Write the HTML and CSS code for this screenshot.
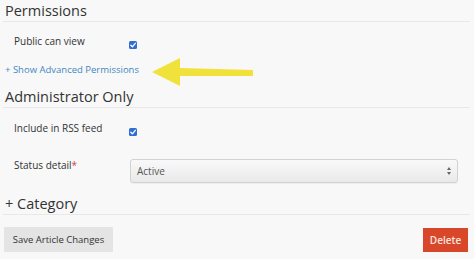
FILE: index.html
```html
<!DOCTYPE html>
<html>
<head>
<meta charset="utf-8">
<link rel="stylesheet" href="styles.css">
</head>
<body>
<div class="page">
  <h2 class="section-title first">Permissions</h2>
  <div class="form-row row-public">
    <span class="field-label">Public can view</span>
    <span class="checkbox"><svg viewBox="0 0 8 8" width="8" height="8"><rect x="0" y="0" width="8" height="8" rx="1.5" fill="#2f6ed6"/><path d="M1.8 4.2 L3.4 5.8 L6.3 2.3" fill="none" stroke="#fff" stroke-width="1.3" stroke-linecap="round" stroke-linejoin="round"/></svg></span>
  </div>
  <a class="advanced-link" href="#">+ Show Advanced Permissions</a>
  <h2 class="section-title admin">Administrator Only</h2>
  <div class="form-row row-rss">
    <span class="field-label">Include in RSS feed</span>
    <span class="checkbox"><svg viewBox="0 0 8 8" width="8" height="8"><rect x="0" y="0" width="8" height="8" rx="1.5" fill="#2f6ed6"/><path d="M1.8 4.2 L3.4 5.8 L6.3 2.3" fill="none" stroke="#fff" stroke-width="1.3" stroke-linecap="round" stroke-linejoin="round"/></svg></span>
  </div>
  <div class="form-row row-status">
    <span class="field-label">Status detail<span class="required">*</span></span>
    <div class="select">
      <span class="select-value">Active</span>
      <svg class="select-arrows" viewBox="0 0 6 10" width="6" height="10"><path d="M3 1 L5 4 L1 4 Z" fill="#666"/><path d="M3 9 L5 6 L1 6 Z" fill="#666"/></svg>
    </div>
  </div>
  <h2 class="section-title category">+ Category</h2>
  <div class="actions">
    <button class="btn btn-save">Save Article Changes</button>
    <button class="btn btn-delete">Delete</button>
  </div>
  <svg class="annotation-arrow" viewBox="0 0 102 28" width="102" height="28"><polygon points="0,14 28,0 28,10 101,12 101,18 28,18 28,28" fill="#f0e23a"/></svg>
</div>
</body>
</html>
```

FILE: styles.css
```css
html, body {
  margin: 0;
  padding: 0;
  background: #f8f8f8;
}
body {
  font-family: "Open Sans", "Liberation Sans", sans-serif;
  color: #333;
}
.page {
  position: relative;
  padding: 0 4px 0 3px;
}
.section-title {
  font-size: 14.5px;
  font-weight: 400;
  line-height: 18px;
  margin: 0;
  padding: 0 0 1px 2px;
  border-bottom: 1px solid #e8e8e8;
  color: #333;
}
.section-title.first { margin-top: 2px; }
.section-title.admin { margin-top: 11px; }
.section-title.category { margin-top: 12px; }
.form-row {
  display: flex;
  align-items: flex-start;
  font-size: 10px;
  line-height: 14px;
}
.field-label {
  width: 115px;
  padding-left: 11px;
  flex: none;
}
.checkbox {
  display: flex;
  margin-top: 7px;
}
.row-public { margin-top: 12px; }
.row-rss { margin-top: 13px; }
.row-status { margin-top: 22px; }
.required { color: #d9413a; }
.advanced-link {
  display: block;
  margin-top: 14px;
  padding-left: 2px;
  font-size: 9.5px;
  line-height: 14px;
  color: #3f88bf;
  text-decoration: none;
}
.select {
  margin-top: 1px;
  margin-left: 1px;
  width: 328px;
  height: 24px;
  box-sizing: border-box;
  border: 1px solid #d2d2d2;
  border-radius: 3px;
  background: linear-gradient(#f9f9f9, #e9e9e9);
  box-shadow: 0 1px 1px rgba(0,0,0,0.05);
  display: flex;
  align-items: center;
  justify-content: space-between;
  padding: 0 5px 0 6px;
}
.select-value {
  font-size: 10px;
  color: #555;
}
.actions {
  margin-top: 12px;
  display: flex;
  justify-content: space-between;
  padding: 0 2px 0 1px;
}
.btn {
  border: none;
  height: 25px;
  font-family: "Open Sans", "Liberation Sans", sans-serif;
  padding: 0;
  cursor: pointer;
}
.btn-save {
  width: 109px;
  background: #e4e4e4;
  color: #333;
  font-size: 9.5px;
  border-radius: 1px;
}
.btn-delete {
  width: 45px;
  height: 24px;
  margin-top: 1px;
  background: #d9472b;
  color: #fbe5de;
  font-size: 10px;
  font-weight: 600;
}
.annotation-arrow {
  position: absolute;
  left: 152px;
  top: 56px;
}
```
